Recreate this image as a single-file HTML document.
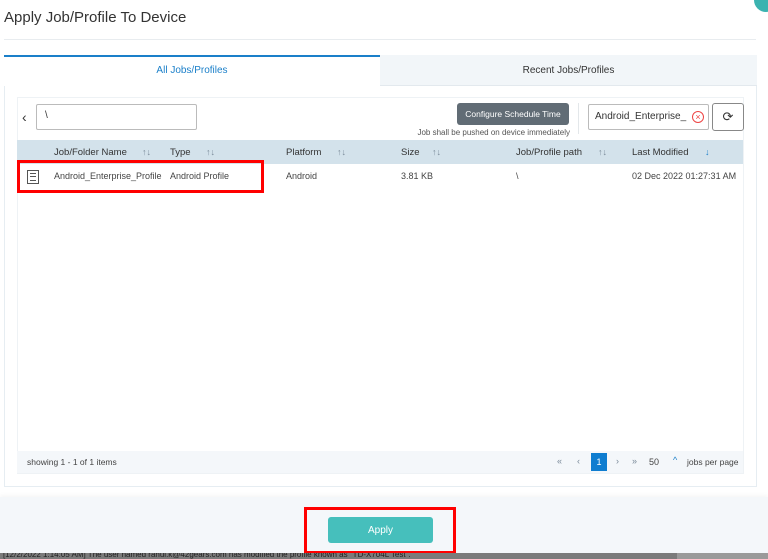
<!DOCTYPE html>
<html><head><style>
*{box-sizing:border-box;margin:0;padding:0}
body{width:768px;height:559px;overflow:hidden;background:#fff;font-family:"Liberation Sans",sans-serif;position:relative;color:#333}
.a{position:absolute}
.t{font-size:9px;color:#444;white-space:nowrap}
.h{font-size:9.5px;color:#333;white-space:nowrap}
.s{color:#7a8a99;font-size:9px}
</style></head><body>
<div class="a" style="left:754px;top:-12px;width:24px;height:24px;border-radius:50%;background:#3bb3b0"></div>
<div class="a" style="left:4px;top:9px;font-size:15px;color:#333">Apply Job/Profile To Device</div>
<div class="a" style="left:4px;top:39px;width:752px;height:1px;background:#e8ecef"></div>
<div class="a" style="left:4px;top:55px;width:753px;height:432px;border:1px solid #e6edf2"></div>
<div class="a" style="left:4px;top:55px;width:376px;height:31px;border-top:2px solid #1a7fc9;background:#fff"></div>
<div class="a" style="left:380px;top:55px;width:377px;height:31px;background:#f2f6f9;border-bottom:1px solid #e3e9ee"></div>
<div class="a" style="left:4px;top:65px;width:376px;text-align:center;font-size:10px;color:#1a7fc9">All Jobs/Profiles</div>
<div class="a" style="left:380px;top:65px;width:377px;text-align:center;font-size:10px;color:#333">Recent Jobs/Profiles</div>
<div class="a" style="left:17px;top:97px;width:727px;height:377px;border:1px solid #eef2f5"></div>
<div class="a" style="left:22px;top:109px;font-size:14px;color:#333">&#8249;</div>
<div class="a" style="left:36px;top:104px;width:161px;height:26px;border:1px solid #bbb;border-radius:2px;font-size:10px;padding:5px 8px">\</div>
<div class="a" style="left:457px;top:103px;width:112px;height:22px;background:#616c75;border-radius:3px;color:#fff;font-size:8.5px;text-align:center;line-height:22px">Configure Schedule Time</div>
<div class="a" style="left:380px;top:128px;width:190px;text-align:right;font-size:8px;color:#555">Job shall be pushed on device immediately</div>
<div class="a" style="left:578px;top:103px;width:1px;height:31px;background:#e3e7ea"></div>
<div class="a" style="left:588px;top:104px;width:121px;height:26px;border:1px solid #bbb;border-radius:2px;font-size:10px;padding:6px 6px;color:#333">Android_Enterprise_</div>
<div class="a" style="left:692px;top:111px;width:12px;height:12px;border:1px solid #e44;border-radius:50%;color:#e44;font-size:9px;line-height:10px;text-align:center;background:#fff">×</div>
<div class="a" style="left:712px;top:103px;width:32px;height:28px;border:1px solid #888;border-radius:3px;text-align:center;line-height:26px;font-size:13px">&#10227;</div>
<div class="a" style="left:17px;top:140px;width:726px;height:24px;background:#d3e2eb"></div>
<div class="a h" style="left:54px;top:147px">Job/Folder Name</div><div class="a s" style="left:142px;top:147px">↑↓</div>
<div class="a h" style="left:170px;top:147px">Type</div><div class="a s" style="left:206px;top:147px">↑↓</div>
<div class="a h" style="left:286px;top:147px">Platform</div><div class="a s" style="left:337px;top:147px">↑↓</div>
<div class="a h" style="left:401px;top:147px">Size</div><div class="a s" style="left:432px;top:147px">↑↓</div>
<div class="a h" style="left:516px;top:147px">Job/Profile path</div><div class="a s" style="left:598px;top:147px">↑↓</div>
<div class="a h" style="left:632px;top:147px">Last Modified</div><div class="a" style="left:705px;top:147px;color:#1a7fc9;font-size:9px">↓</div>
<div class="a" style="left:27px;top:170px;width:12px;height:14px;border:1px solid #555"><div style="margin:2px 2px;border-top:1px solid #555;border-bottom:1px solid #555;height:4px"></div><div style="margin:0 2px;border-bottom:1px solid #555;height:2px"></div></div>
<div class="a t" style="left:54px;top:171px">Android_Enterprise_Profile</div>
<div class="a t" style="left:170px;top:171px">Android Profile</div>
<div class="a t" style="left:286px;top:171px">Android</div>
<div class="a t" style="left:401px;top:171px">3.81 KB</div>
<div class="a t" style="left:516px;top:171px">\</div>
<div class="a t" style="left:632px;top:171px">02 Dec 2022 01:27:31 AM</div>
<div class="a" style="left:17px;top:160px;width:247px;height:33px;border:3px solid #f00"></div>
<div class="a" style="left:17px;top:451px;width:726px;height:22px;background:#f4f7fa"></div>
<div class="a t" style="left:27px;top:457px;font-size:8.5px">showing 1 - 1 of 1 items</div>
<div class="a s" style="left:557px;top:456px">«</div><div class="a s" style="left:577px;top:456px">‹</div>
<div class="a" style="left:591px;top:453px;width:16px;height:18px;background:#0f7dd0;color:#fff;font-size:9px;text-align:center;line-height:18px">1</div>
<div class="a s" style="left:616px;top:456px">›</div><div class="a s" style="left:632px;top:456px">»</div>
<div class="a t" style="left:649px;top:457px;font-size:9px">50</div>
<div class="a" style="left:673px;top:455px;color:#1a7fc9;font-size:9px">^</div>
<div class="a t" style="left:687px;top:457px;font-size:8.5px">jobs per page</div>
<div class="a" style="left:0;top:497px;width:768px;height:57px;background:#f4f7fa;box-shadow:0 -2px 4px rgba(0,0,0,.04)"></div>
<div class="a" style="left:328px;top:517px;width:105px;height:26px;background:#46bfbc;border-radius:3px;color:#fff;font-size:10px;text-align:center;line-height:27px">Apply</div>
<div class="a" style="left:304px;top:507px;width:152px;height:47px;border:3px solid #f00"></div>
<div class="a" style="left:0;top:553px;width:677px;height:6px;background:#7b7b7b;overflow:hidden"><div style="font-size:8px;color:#222;line-height:8px;margin-top:-2px;padding-left:3px;white-space:nowrap">[12/2/2022 1:14:05 AM] The user named rahul.k@42gears.com has modified the profile known as "TD-X704L Test".</div></div>
<div class="a" style="left:677px;top:553px;width:91px;height:6px;background:#9a9a9a"></div>
</body></html>
